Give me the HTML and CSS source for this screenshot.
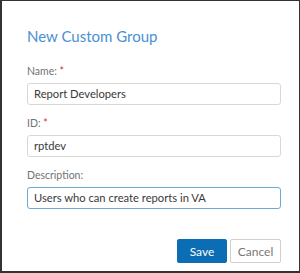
FILE: index.html
```html
<!DOCTYPE html>
<html lang="en">
<head>
  <meta charset="UTF-8">
  <title>New Custom Group</title>
  <link rel="stylesheet" href="styles.css">
</head>
<body>
  <div class="dialog">
    <h1 class="dialog-title">New Custom Group</h1>

    <div class="field">
      <label class="field-label">Name: <span class="required">*</span></label>
      <div class="input">Report Developers</div>
    </div>

    <div class="field">
      <label class="field-label">ID: <span class="required">*</span></label>
      <div class="input">rptdev</div>
    </div>

    <div class="field">
      <label class="field-label">Description:</label>
      <div class="input focused">Users who can create reports in VA</div>
    </div>

    <div class="buttons">
      <button class="btn primary">Save</button>
      <button class="btn">Cancel</button>
    </div>
  </div>
</body>
</html>
```

FILE: styles.css
```css
body {
  margin: 0;
  font-family: Lato, "Open Sans", sans-serif;
  background-color: #fff;
}
.dialog {
  box-sizing: border-box;
  width: 300px;
  height: 273px;
  border-style: solid;
  border-color: #333;
  border-width: 1px 1px 2px 2px;
  padding: 25px 18px 0 25px;
  display: flex;
  flex-direction: column;
}
.dialog-title {
  margin: 0 0 18px 0;
  font-size: 15px;
  line-height: 20px;
  font-weight: normal;
  color: #4a8fd3;
}
.field {
  display: flex;
  flex-direction: column;
  gap: 5px;
  margin-bottom: 11px;
}
.field-label {
  font-size: 10.5px;
  line-height: 14px;
  color: #737373;
}
.required {
  color: #d8332a;
}
.input {
  box-sizing: border-box;
  height: 22px;
  border: 1px solid #d8d8d8;
  border-radius: 3px;
  padding: 0 6px;
  font-size: 11.2px;
  line-height: 20px;
  color: #3a3a3a;
}
.input.focused {
  border-color: #6aaad8;
}
.buttons {
  margin-top: 19px;
  display: flex;
  justify-content: flex-end;
  gap: 3px;
}
.btn {
  box-sizing: border-box;
  height: 24px;
  width: 51px;
  border: 1px solid #cfcfcf;
  border-radius: 2px;
  background-color: #fff;
  color: #777;
  font-family: Lato, "Open Sans", sans-serif;
  font-size: 12px;
  padding: 0;
}
.btn.primary {
  width: 50px;
  background-color: #0b6db3;
  border-color: #0b6db3;
  color: #fff;
}
```
